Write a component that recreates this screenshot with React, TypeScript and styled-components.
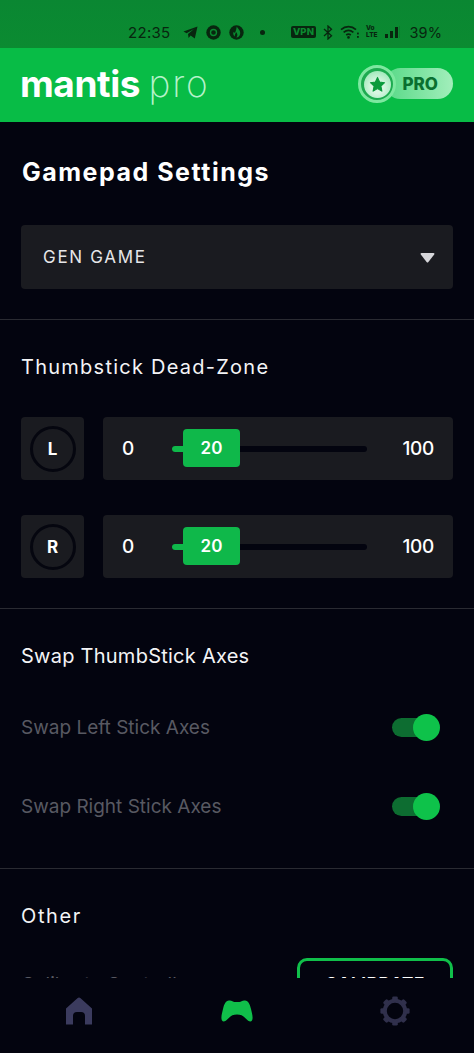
import React from "react";
import styled, { createGlobalStyle } from "styled-components";

const GlobalStyle = createGlobalStyle`
  html, body {
    margin: 0;
    padding: 0;
    background: #03040f;
  }
`;

const App = () => {
  return (
    <>
      <GlobalStyle />
      <Screen>
        <StatusBar>
          <Clock>22:35</Clock>
          <StatusIcons>
            <svg width="15" height="13" viewBox="0 0 15 13">
              <path d="M14.5 0.5 L11.8 12.5 L7.6 9.6 L5.6 12 L5 8 L11 3 L3.6 7.2 L0.5 5.6 Z" fill="#08260f" />
            </svg>
            <svg width="15" height="15" viewBox="0 0 15 15">
              <circle cx="7.5" cy="7.5" r="7.2" fill="#08260f" />
              <circle cx="7.5" cy="7.5" r="3" fill="none" stroke="#0a8a30" strokeWidth="1.4" />
            </svg>
            <svg width="15" height="15" viewBox="0 0 15 15">
              <circle cx="7.5" cy="7.5" r="7.2" fill="#08260f" />
              <path d="M7.8 1.5 C9 4 11.5 5 11.2 8.5 C11 11 9 12.4 7.4 12.4 C9 10.8 8.6 8.6 7 7 C6.8 8.6 5.6 9.2 5.8 11.4 C4.4 10.4 3.8 8.8 4.6 6.8 C5.2 8 6 8 6.4 7 C7 5.4 7.4 3.6 7.8 1.5 Z" fill="#0a8a30" />
            </svg>
            <StatusDot />
          </StatusIcons>
          <StatusRight>
            <VpnTag>VPN</VpnTag>
            <svg width="10" height="15" viewBox="0 0 10 15">
              <path d="M1 4 L8.5 10.8 L5 14 V1 L8.5 4.2 L1 11" fill="none" stroke="#08260f" strokeWidth="1.3" />
            </svg>
            <svg width="19" height="14" viewBox="0 0 19 14">
              <path d="M1 4.6 C5.4 0.6 11.6 0.6 16 4.6 M3.6 7.4 C6.6 4.8 10.4 4.8 13.4 7.4 M6.2 10 C7.8 8.8 9.2 8.8 10.8 10" fill="none" stroke="#08260f" strokeWidth="1.7" />
              <circle cx="8.5" cy="12.4" r="1.3" fill="#08260f" />
              <rect x="17" y="7.6" width="1.8" height="1.8" fill="#08260f" />
              <rect x="17" y="11" width="1.8" height="1.8" fill="#08260f" />
            </svg>
            <VolteTag>
              <span>Vo</span>
              <span>LTE</span>
            </VolteTag>
            <svg width="15" height="12" viewBox="0 0 15 12">
              <rect x="0" y="8" width="3" height="4" fill="#08260f" />
              <rect x="5" y="5" width="3" height="7" fill="#08260f" />
              <rect x="10" y="1" width="3" height="11" fill="#08260f" />
              <rect x="14" y="0" width="1" height="12" fill="#0b7a2c" />
            </svg>
            <Battery>39%</Battery>
          </StatusRight>
        </StatusBar>

        <Header>
          <Logo>
            mantis <LogoLight>pro</LogoLight>
          </Logo>
          <ProBadge>
            <ProMedal>
              <ProMedalInner>
                <svg width="17" height="17" viewBox="0 0 24 24">
                  <path d="M12 2 L15 8.6 L22 9.4 L16.8 14.2 L18.2 21.4 L12 17.8 L5.8 21.4 L7.2 14.2 L2 9.4 L9 8.6 Z" fill="#0a9a3c" stroke="#0a9a3c" strokeWidth="1.5" strokeLinejoin="round" />
                </svg>
              </ProMedalInner>
            </ProMedal>
            <ProText>PRO</ProText>
          </ProBadge>
        </Header>

        <Content>
          <TopSection>
            <PageTitle>Gamepad Settings</PageTitle>
            <SelectBox>
              <SelectText>GEN GAME</SelectText>
              <svg width="15" height="11" viewBox="0 0 15 11">
                <path d="M1.6 1 H13.4 Q15 1 14.2 2.4 L8.4 10 Q7.5 11 6.6 10 L0.8 2.4 Q0 1 1.6 1 Z" fill="#d6d6da" />
              </svg>
            </SelectBox>
          </TopSection>

          <Section>
            <SectionTitle $tracking={1.25}>Thumbstick Dead-Zone</SectionTitle>
            <StickList>
              {["L", "R"].map((stick) => (
                <StickRow key={stick}>
                  <StickBox>
                    <StickCircle>{stick}</StickCircle>
                  </StickBox>
                  <SliderPanel>
                    <RangeMin>0</RangeMin>
                    <Track>
                      <TrackFill />
                      <Thumb>20</Thumb>
                    </Track>
                    <RangeMax>100</RangeMax>
                  </SliderPanel>
                </StickRow>
              ))}
            </StickList>
          </Section>

          <Section>
            <SectionTitle $tracking={0.25}>Swap ThumbStick Axes</SectionTitle>
            <SwapList>
              <SwapRow>
                <SwapLabel>Swap Left Stick Axes</SwapLabel>
                <Toggle>
                  <ToggleKnob />
                </Toggle>
              </SwapRow>
              <SwapRow>
                <SwapLabel>Swap Right Stick Axes</SwapLabel>
                <Toggle>
                  <ToggleKnob />
                </Toggle>
              </SwapRow>
            </SwapList>
          </Section>

          <Section>
            <SectionTitle $tracking={1.6}>Other</SectionTitle>
            <OtherRow>
              <SwapLabel>Calibrate Controller</SwapLabel>
              <CalibrateButton>CALIBRATE</CalibrateButton>
            </OtherRow>
          </Section>
        </Content>

        <BottomNav>
          <svg width="28" height="28" viewBox="0 0 28 28">
            <path d="M14 0.5 Q14.8 0.5 15.6 1.2 L27 11.4 V27.5 H20 V19 Q20 15 16 15 H12 Q8 15 8 19 V27.5 H1 V11.4 L12.4 1.2 Q13.2 0.5 14 0.5 Z" fill="#3b3b5e" />
          </svg>
          <svg width="32" height="22" viewBox="0 0 32 22">
            <path d="M8 0.6 C10.5 0.2 12 1.8 13.5 2 H18.5 C20 1.8 21.5 0.2 24 0.6 C27.4 1.2 28.8 4 30 9 C31 13 32.4 18 31 20.6 C29.6 22.6 27 21 25 18.8 C22.5 16 20 14.6 16 14.6 C12 14.6 9.5 16 7 18.8 C5 21 2.4 22.6 1 20.6 C-0.4 18 1 13 2 9 C3.2 4 4.6 1.2 8 0.6 Z" fill="#10bf4a" />
          </svg>
          <svg width="30" height="30" viewBox="0 0 30 30">
            <circle cx="15" cy="15" r="10.2" fill="none" stroke="#30304c" strokeWidth="4" />
            {[0, 45, 90, 135, 180, 225, 270, 315].map((angle) => (
              <rect key={angle} x="12.2" y="0.4" width="5.6" height="5" rx="1.4" fill="#30304c" transform={`rotate(${angle} 15 15)`} />
            ))}
          </svg>
        </BottomNav>
      </Screen>
    </>
  );
};

const fontStack = `"Inter", "Noto Sans", sans-serif`;

const Screen = styled.div`
  width: 474px;
  height: 1053px;
  display: flex;
  flex-direction: column;
  overflow: hidden;
  background: #03040f;
  font-family: ${fontStack};
`;

const StatusBar = styled.div`
  height: 48px;
  flex: none;
  box-sizing: border-box;
  padding: 16px 32px 0 128px;
  display: flex;
  align-items: center;
  background: linear-gradient(#0a8732, #0b8b31);
  color: #08260f;
`;

const Clock = styled.span`
  font-size: 15px;
  letter-spacing: 0.3px;
  width: 55px;
`;

const StatusIcons = styled.div`
  display: flex;
  align-items: center;
  gap: 8px;
`;

const StatusDot = styled.span`
  width: 5px;
  height: 5px;
  margin-left: 8px;
  border-radius: 50%;
  background: #08260f;
`;

const StatusRight = styled.div`
  margin-left: auto;
  display: flex;
  align-items: center;
  gap: 7px;
`;

const VpnTag = styled.span`
  background: #08260f;
  color: #0b8b31;
  font-size: 9.5px;
  font-weight: 800;
  line-height: 12px;
  padding: 0 2px;
  border-radius: 2px;
  letter-spacing: 0.1px;
`;

const VolteTag = styled.span`
  display: flex;
  flex-direction: column;
  font-size: 6.5px;
  font-weight: 800;
  line-height: 7px;
  letter-spacing: 0;
`;

const Battery = styled.span`
  font-size: 14.5px;
  letter-spacing: 0.1px;
  margin-left: 3px;
`;

const Header = styled.div`
  height: 74px;
  flex: none;
  box-sizing: border-box;
  padding: 0 21px 0 20px;
  display: flex;
  align-items: center;
  justify-content: space-between;
  background: #08bc46;
`;

const Logo = styled.div`
  font-size: 37px;
  font-weight: 700;
  line-height: 40px;
  color: #fff;
  letter-spacing: -0.4px;
  margin-top: -2px;
`;

const LogoLight = styled.span`
  font-weight: 200;
  color: #b6f2ca;
  letter-spacing: 1.8px;
`;

const ProBadge = styled.div`
  position: relative;
  width: 68px;
  height: 31px;
  margin-top: -3px;
  border-radius: 16px;
  display: flex;
  align-items: center;
  justify-content: flex-end;
  padding-right: 15px;
  box-sizing: border-box;
  background: linear-gradient(90deg, #58d987, #a2eebb);
`;

const ProMedal = styled.div`
  position: absolute;
  left: -27px;
  top: -3px;
  width: 38px;
  height: 38px;
  box-sizing: border-box;
  border-radius: 50%;
  border: 3px solid #7de8a0;
  background: #1dab50;
  display: flex;
  align-items: center;
  justify-content: center;
`;

const ProMedalInner = styled.div`
  width: 27px;
  height: 27px;
  border-radius: 50%;
  display: flex;
  align-items: center;
  justify-content: center;
  background: radial-gradient(circle at 50% 60%, #d8f6e2 30%, #86e3a8 100%);
`;

const ProText = styled.span`
  font-size: 17px;
  font-weight: 800;
  color: #0a7030;
`;

const Content = styled.div`
  flex: 1;
  min-height: 0;
  overflow: hidden;
`;

const TopSection = styled.div`
  padding: 34px 21px 30px;
`;

const PageTitle = styled.h1`
  margin: 0 0 37px 1px;
  font-size: 25px;
  line-height: 32px;
  font-weight: 700;
  letter-spacing: 1.5px;
  color: #fff;
`;

const SelectBox = styled.div`
  height: 64px;
  box-sizing: border-box;
  padding: 0 18px 0 22px;
  display: flex;
  align-items: center;
  justify-content: space-between;
  background: #1a1b20;
  border-radius: 4px;
`;

const SelectText = styled.span`
  font-size: 17px;
  letter-spacing: 1.7px;
  color: #e6e6e8;
`;

const Section = styled.section`
  border-top: 1px solid #2a2b32;
  padding: 33px 21px 30px;
`;

const SectionTitle = styled.h2<{ $tracking: number }>`
  margin: 0;
  font-size: 20px;
  line-height: 28px;
  font-weight: 400;
  letter-spacing: ${(props) => props.$tracking}px;
  color: #f4f4f6;
`;

const StickList = styled.div`
  margin-top: 36px;
  display: flex;
  flex-direction: column;
  gap: 35px;
`;

const StickRow = styled.div`
  display: flex;
  gap: 19px;
`;

const StickBox = styled.div`
  width: 63px;
  height: 63px;
  flex: none;
  display: flex;
  align-items: center;
  justify-content: center;
  background: #1a1b20;
  border-radius: 4px;
`;

const StickCircle = styled.div`
  width: 46px;
  height: 46px;
  box-sizing: border-box;
  border: 3px solid #05060f;
  border-radius: 50%;
  display: flex;
  align-items: center;
  justify-content: center;
  font-size: 17px;
  font-weight: 700;
  color: #fff;
`;

const SliderPanel = styled.div`
  flex: 1;
  height: 63px;
  box-sizing: border-box;
  padding: 0 19px 0 19px;
  display: flex;
  align-items: center;
  background: #1a1b20;
  border-radius: 4px;
  color: #fff;
  font-size: 19px;
  font-weight: 500;
`;

const RangeMin = styled.span`
  width: 50px;
`;

const Track = styled.div`
  position: relative;
  width: 195px;
  height: 6px;
  border-radius: 3px;
  background: #03040f;
`;

const TrackFill = styled.div`
  width: 20px;
  height: 100%;
  border-radius: 3px;
  background: #0fb84a;
`;

const Thumb = styled.div`
  position: absolute;
  left: 11px;
  top: -17px;
  width: 57px;
  height: 38px;
  border-radius: 4px;
  display: flex;
  align-items: center;
  justify-content: center;
  background: #0fb84a;
  font-size: 17px;
  font-weight: 600;
  color: #fff;
`;

const RangeMax = styled.span`
  margin-left: auto;
  letter-spacing: -0.3px;
`;

const SwapList = styled.div`
  margin-top: 43px;
  display: flex;
  flex-direction: column;
  gap: 50px;
  padding-bottom: 17px;
`;

const SwapRow = styled.div`
  height: 29px;
  display: flex;
  align-items: center;
  justify-content: space-between;
`;

const SwapLabel = styled.span`
  font-size: 19px;
  color: #585962;
`;

const Toggle = styled.div`
  position: relative;
  width: 38px;
  height: 19px;
  margin-right: 23px;
  border-radius: 10px;
  background: #0d6d31;
`;

const ToggleKnob = styled.div`
  position: absolute;
  right: -10px;
  top: -4px;
  width: 27px;
  height: 27px;
  border-radius: 50%;
  background: #0ec24a;
`;

const OtherRow = styled.div`
  margin-top: 28px;
  display: flex;
  align-items: center;
  justify-content: space-between;
`;

const CalibrateButton = styled.button`
  width: 156px;
  height: 52px;
  background: transparent;
  border: 3px solid #10bf4a;
  border-radius: 10px;
  color: #fff;
  font-family: ${fontStack};
  font-size: 17px;
  font-weight: 700;
  letter-spacing: 0.6px;
`;

const BottomNav = styled.nav`
  height: 75px;
  flex: none;
  box-sizing: border-box;
  padding: 0 64px 10px 65px;
  display: flex;
  align-items: center;
  justify-content: space-between;
  background: #03040f;
`;

export default App;
